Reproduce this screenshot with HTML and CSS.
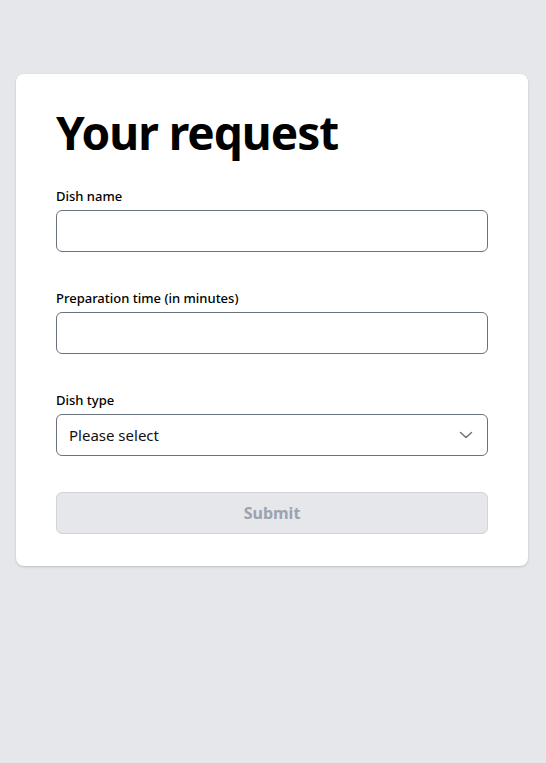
FILE: index.html
```html
<!DOCTYPE html>
<html lang="en">
<head>
<meta charset="utf-8">
<title>Your request</title>
<link rel="stylesheet" href="styles.css">
</head>
<body>
<main class="page">
  <form class="card">
    <h1 class="title">Your request</h1>
    <div class="field">
      <label class="label" for="name">Dish name</label>
      <input class="input" id="name" type="text">
    </div>
    <div class="field">
      <label class="label" for="time">Preparation time (in minutes)</label>
      <input class="input" id="time" type="text">
    </div>
    <div class="field">
      <label class="label" for="type">Dish type</label>
      <div class="select">
        <span class="select-text">Please select</span>
        <svg class="chevron" width="14" height="8" viewBox="0 0 14 8"><path d="M1.5 1.5 L7 6.5 L12.5 1.5" fill="none" stroke="#6b7280" stroke-width="1.5" stroke-linecap="round" stroke-linejoin="round"/></svg>
      </div>
    </div>
    <button class="submit" type="button" disabled>Submit</button>
  </form>
</main>
</body>
</html>
```
FILE: styles.css
```css
* { box-sizing: border-box; }
html, body { margin: 0; padding: 0; }
body {
  background: #e5e7eb;
  font-family: "Noto Sans", "Open Sans", sans-serif;
  color: #000;
  min-height: 763px;
}
.page {
  padding: 74px 18px 0 16px;
}
.card {
  width: 512px;
  background: #fff;
  border-radius: 8px;
  box-shadow: 0 1px 3px rgba(0,0,0,0.12), 0 1px 2px rgba(0,0,0,0.06);
  padding: 40px 40px 32px;
  display: flex;
  flex-direction: column;
}
.title {
  margin: 0;
  font-size: 46px;
  line-height: 36px;
  font-weight: 700;
  letter-spacing: -1px;
  margin-bottom: 36px;
}
.field {
  display: flex;
  flex-direction: column;
  gap: 4px;
  margin-bottom: 36px;
}
.label {
  font-size: 13px;
  line-height: 20px;
  font-weight: 500;
  color: #000;
}
.input, .select {
  height: 42px;
  border: 1px solid #6b7280;
  border-radius: 6px;
  background: #fff;
  font: inherit;
  font-size: 15px;
}
.select {
  display: flex;
  align-items: center;
  justify-content: space-between;
  padding: 0 14px 0 12px;
}
.select-text { font-size: 15px; color: #111; }
.submit {
  height: 42px;
  border: 1px solid #d1d5db;
  border-radius: 6px;
  background: #e5e7eb;
  color: #9ca3af;
  font: inherit;
  font-size: 16px;
  font-weight: 700;
}
```
